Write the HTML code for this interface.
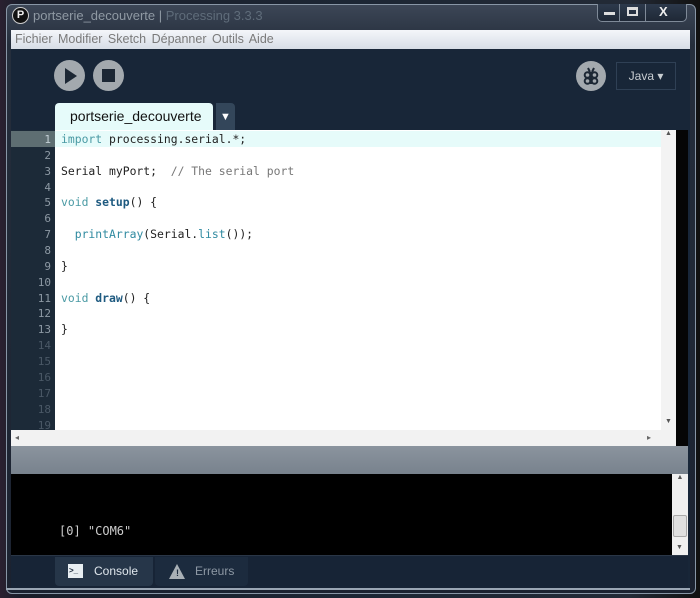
<!DOCTYPE html>
<html><head><meta charset="utf-8"><style>
*{margin:0;padding:0;box-sizing:border-box}
body{width:700px;height:598px;overflow:hidden;background:#151a24;font-family:"Liberation Sans",sans-serif;position:relative}
div{position:absolute}
.mono{font-family:"DejaVu Sans Mono","Liberation Mono",monospace;font-size:11.4px}
.ln{position:absolute;left:0;width:40px;text-align:right;color:#8d99a4;font-family:"DejaVu Sans Mono",monospace;font-size:11px}
.cl{position:absolute;left:6px;color:#222;white-space:pre}
</style></head><body>
<div style="left:0;top:0;width:700px;height:598px;background:linear-gradient(90deg,#2a2030 0,#1a1e2a 3%,#1c2634 50%,#232a36 90%,#111 100%)"></div>
<div style="left:6px;top:4px;width:690px;height:590px;border:1px solid #8896a6;border-radius:6px;background:linear-gradient(#3c4656,#252e3c 40px,#1b2230)"></div>
<!-- title -->
<div style="left:12px;top:7px;width:17px;height:17px;border-radius:50%;background:#111;border:1px solid #ccc;color:#eee;font-size:11px;font-weight:bold;text-align:center;line-height:15px">P</div>
<div style="left:33px;top:8px;font-size:13px;color:#8f99a3">portserie_decouverte | <span style="color:#5f6c7a">Processing 3.3.3</span></div>
<div style="left:597px;top:4px;width:90px;height:18px;border:1px solid #7f8a98;border-top:none;border-radius:0 0 5px 5px;background:linear-gradient(#2d3a4c,#1f2836)"></div>
<div style="left:619px;top:4px;width:1px;height:18px;background:#7f8a98"></div>
<div style="left:645px;top:4px;width:1px;height:18px;background:#7f8a98"></div>
<div style="left:604px;top:12px;width:11px;height:3px;background:#ddd"></div>
<div style="left:627px;top:7px;width:11px;height:9px;border:2px solid #ddd;border-top-width:3px"></div>
<div style="left:659px;top:4px;color:#eee;font-size:13px;font-weight:bold">X</div>
<!-- menu -->
<div style="left:11px;top:30px;width:679px;height:19px;background:linear-gradient(#f4f6fa,#d7dde6);font-size:12.5px;color:#7a7a7a;line-height:19px;padding-left:4px;word-spacing:2px">Fichier Modifier Sketch Dépanner Outils Aide</div>
<!-- toolbar -->
<div style="left:11px;top:49px;width:679px;height:541px;background:#182638"></div>
<div style="left:54px;top:60px;width:31px;height:31px;border-radius:50%;background:#a3a9ae"></div>
<div style="left:65px;top:68px;width:0;height:0;border-left:12px solid #1c2734;border-top:8px solid transparent;border-bottom:8px solid transparent"></div>
<div style="left:93px;top:60px;width:31px;height:31px;border-radius:50%;background:#a3a9ae"></div>
<div style="left:102px;top:69px;width:13px;height:13px;background:#1c2734"></div>
<div style="left:576px;top:61px;width:30px;height:30px;border-radius:50%;background:#a3a9ae"></div>
<svg style="position:absolute;left:576px;top:61px" width="30" height="30" viewBox="0 0 30 30" fill="none" stroke="#1c2734" stroke-width="2"><path d="M12 7l2 4M18 7l-2 4"/><circle cx="11.5" cy="14" r="2.8"/><circle cx="18.5" cy="14" r="2.8"/><circle cx="11.5" cy="20" r="2.8"/><circle cx="18.5" cy="20" r="2.8"/><path d="M15 11v12"/></svg>
<div style="left:616px;top:62px;width:60px;height:28px;border:1px solid #2f4055;color:#c8cdd2;font-size:12px;text-align:center;line-height:26px">Java ▾</div>
<!-- tabs -->
<div style="left:55px;top:103px;width:158px;height:28px;background:#e6fbfa;border-radius:4px 4px 0 0;font-size:14px;color:#111;line-height:27px;padding-left:15px">portserie_decouverte</div>
<div style="left:216px;top:103px;width:19px;height:28px;background:#33465a;border-radius:0 4px 0 0;color:#fff;font-size:11px;text-align:center;line-height:28px">▼</div>
<!-- editor -->
<div style="left:11px;top:130px;width:44px;height:300px;background:#1c2a38"></div>
<div style="left:11px;top:131px;width:44px;height:16px;background:#5e6e72"></div>
<div style="left:55px;top:130px;width:606px;height:300px;background:#fff"></div>
<div style="left:55px;top:131px;width:606px;height:16px;background:#e6fbfa"></div>
<div style="left:661px;top:130px;width:15px;height:300px;background:#f3f3f3;color:#555;font-size:7px;text-align:center">▲<br><span style="position:absolute;top:288px;left:4px">▼</span></div>
<div style="left:676px;top:130px;width:12px;height:316px;background:#050505"></div>
<div style="left:11px;top:430px;width:665px;height:16px;background:#f2f2f2;color:#666;font-size:8px;line-height:16px;padding-left:4px">◂<span style="position:absolute;left:636px">▸</span></div>
<div style="left:11px;top:131px;width:650px;height:300px;overflow:hidden">
<div class="ln" style="top:2px;color:#c4d0d6">1</div><div class="ln" style="top:18px">2</div><div class="ln" style="top:34px">3</div><div class="ln" style="top:50px">4</div><div class="ln" style="top:65px">5</div><div class="ln" style="top:81px">6</div><div class="ln" style="top:97px">7</div><div class="ln" style="top:113px">8</div><div class="ln" style="top:129px">9</div><div class="ln" style="top:145px">10</div><div class="ln" style="top:161px">11</div><div class="ln" style="top:176px">12</div><div class="ln" style="top:192px">13</div>
<div class="ln" style="top:208px;color:#4a5866">14</div><div class="ln" style="top:224px;color:#4a5866">15</div><div class="ln" style="top:240px;color:#4a5866">16</div><div class="ln" style="top:256px;color:#4a5866">17</div><div class="ln" style="top:272px;color:#4a5866">18</div><div class="ln" style="top:288px;color:#4a5866">19</div>
<div style="left:44px;top:0;width:600px" class="mono">
<div class="cl" style="top:1px"><span style="color:#4a9aa4">import</span> processing.serial.*;</div>
<div class="cl" style="top:33px">Serial myPort;  <span style="color:#777">// The serial port</span></div>
<div class="cl" style="top:64px"><span style="color:#4a9aa4">void</span> <b style="color:#1e5a80">setup</b>() {</div>
<div class="cl" style="top:96px">  <span style="color:#2f8aa0">printArray</span>(Serial.<span style="color:#2f8aa0">list</span>());</div>
<div class="cl" style="top:128px">}</div>
<div class="cl" style="top:160px"><span style="color:#4a9aa4">void</span> <b style="color:#1e5a80">draw</b>() {</div>
<div class="cl" style="top:191px">}</div>
</div></div>
<!-- gray bar -->
<div style="left:11px;top:446px;width:677px;height:28px;background:linear-gradient(#8b949e,#78828d)"></div>
<!-- console -->
<div style="left:11px;top:474px;width:661px;height:81px;background:#000"></div>
<div class="mono" style="left:59px;top:524px;color:#ccc;font-size:12px">[0] "COM6"</div>
<div style="left:672px;top:474px;width:16px;height:81px;background:#f0f0f0;color:#555;font-size:7px;text-align:center">▲</div>
<div style="left:673px;top:515px;width:14px;height:22px;background:#e0e0e0;border:1px solid #aaa;border-radius:2px"></div>
<div style="left:676px;top:544px;color:#555;font-size:7px">▼</div>
<!-- bottom tabs -->
<div style="left:11px;top:555px;width:677px;height:33px;background:#172436;border-top:1px solid #2a3646"></div>
<div style="left:55px;top:557px;width:98px;height:29px;background:#263649;border-radius:0 0 4px 4px"></div>
<div style="left:68px;top:564px;width:15px;height:14px;background:#e8eef2;color:#172436;font-size:8px;font-weight:bold;line-height:14px;padding-left:1px">&gt;_</div>
<div style="left:94px;top:564px;color:#dfe6ec;font-size:12px">Console</div>
<div style="left:155px;top:557px;width:93px;height:29px;background:#1c2b3e;border-radius:0 0 4px 4px"></div>
<div style="left:169px;top:564px;width:0;height:0;border-left:8px solid transparent;border-right:8px solid transparent;border-bottom:15px solid #a9b0b6"></div>
<div style="left:176px;top:568px;color:#1c2b3e;font-size:9px;font-weight:bold">!</div>
<div style="left:195px;top:564px;color:#8e99a5;font-size:12px">Erreurs</div>
<div style="left:6px;top:588px;width:684px;height:2px;background:#9aa6b4"></div>
</body></html>
